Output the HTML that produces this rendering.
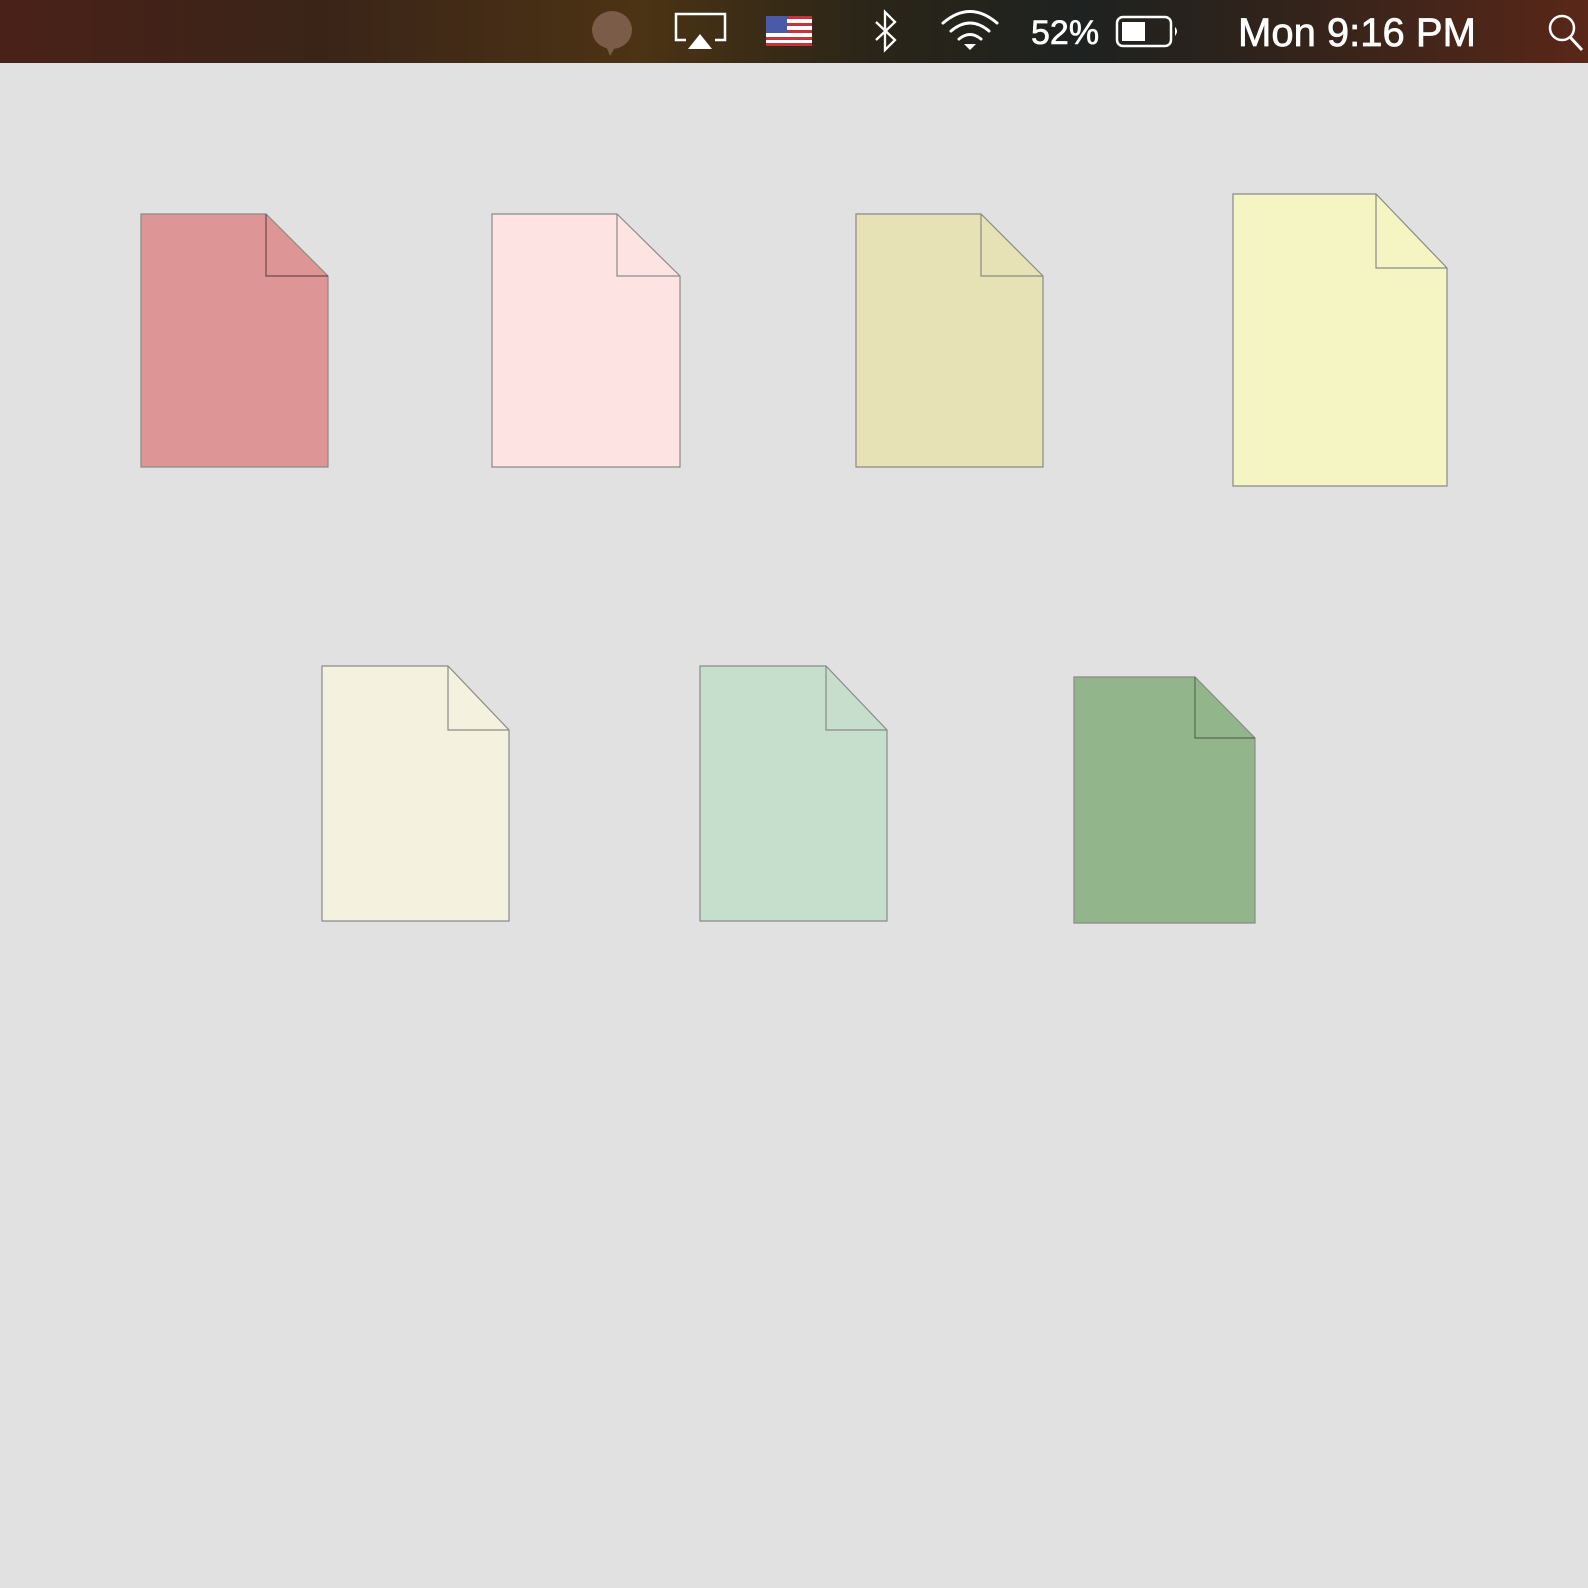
<!DOCTYPE html>
<html><head><meta charset="utf-8"><style>
html,body{margin:0;padding:0;width:1588px;height:1588px;overflow:hidden;background:#e1e1e1;font-family:"Liberation Sans",sans-serif}
</style></head><body>
<svg width="1588" height="1588" viewBox="0 0 1588 1588" xmlns="http://www.w3.org/2000/svg">
<defs>
<linearGradient id="mb" x1="0" x2="1" y1="0" y2="0">
<stop offset="0" stop-color="#4a2119"/>
<stop offset="0.2" stop-color="#3a2418"/>
<stop offset="0.4" stop-color="#4c3314"/>
<stop offset="0.55" stop-color="#2a2518"/>
<stop offset="0.68" stop-color="#1e2220"/>
<stop offset="0.82" stop-color="#33231b"/>
<stop offset="1" stop-color="#5a2718"/>
</linearGradient>
</defs>
<rect x="0" y="0" width="1588" height="63" fill="url(#mb)"/>
<ellipse cx="612" cy="30" rx="20" ry="19" fill="#7a5c48"/>
<path d="M606 46 L610 56 L616 46 Z" fill="#7a5c48"/>
<path d="M686 40 H676 V14 H725 V40 H715" fill="none" stroke="#fff" stroke-width="2.5"/>
<path d="M688 49 L700 34 L712 49 Z" fill="#fff"/>
<g>
<rect x="766" y="16" width="46" height="30" fill="#fff"/>
<rect x="766" y="16" width="46" height="3" fill="#c8323a"/>
<rect x="766" y="23" width="46" height="3" fill="#c8323a"/>
<rect x="766" y="30" width="46" height="3" fill="#c8323a"/>
<rect x="766" y="37" width="46" height="3" fill="#c8323a"/>
<rect x="766" y="43" width="46" height="3" fill="#c8323a"/>
<rect x="766" y="16" width="21" height="17" fill="#4a5aa8"/>
</g>
<path d="M876 22 L895 40 L885 50 V12 L895 22 L876 40" fill="none" stroke="#fff" stroke-width="2.3"/>
<g fill="none" stroke="#fff" stroke-width="3" stroke-linecap="round">
<path d="M943 23 Q970 0 997 23"/>
<path d="M951 31 Q970 15 989 31"/>
<path d="M959 39 Q970 30 981 39"/>
</g>
<path d="M964 44 L970 50 L976 44 Z" fill="#fff"/>
<text x="1031" y="44" font-size="34" fill="#fff" stroke="#fff" stroke-width="0.6">52%</text>
<rect x="1117" y="17" width="54" height="29" rx="6" fill="none" stroke="#fff" stroke-width="2.5"/>
<rect x="1122" y="22" width="23" height="19" fill="#fff"/>
<path d="M1175 27 Q1179 31 1175 36 Z" fill="#fff"/>
<text x="1238" y="46" font-size="40" fill="#fff" stroke="#fff" stroke-width="0.7">Mon 9:16 PM</text>
<circle cx="1562" cy="28" r="12" fill="none" stroke="#fff" stroke-width="2.5"/>
<path d="M1570 37 L1582 50" stroke="#fff" stroke-width="3"/>
<g stroke="#8a8a8a" stroke-width="1.2">
<path d="M141 214 H266 L328 276 V467 H141 Z" fill="#de9595"/>
<path d="M266 214 V276 H328" fill="none" stroke="#6a4a4a"/>
<path d="M492 214 H617 L680 276 V467 H492 Z" fill="#fee3e3"/>
<path d="M617 214 V276 H680" fill="none"/>
<path d="M856 214 H981 L1043 276 V467 H856 Z" fill="#e6e2b6"/>
<path d="M981 214 V276 H1043" fill="none"/>
<path d="M1233 194 H1376 L1447 268 V486 H1233 Z" fill="#f5f4c3"/>
<path d="M1376 194 V268 H1447" fill="none"/>
<path d="M322 666 H448 L509 730 V921 H322 Z" fill="#f4f2df"/>
<path d="M448 666 V730 H509" fill="none"/>
<path d="M700 666 H826 L887 730 V921 H700 Z" fill="#c6dfcc"/>
<path d="M826 666 V730 H887" fill="none"/>
<path d="M1074 677 H1195 L1255 738 V923 H1074 Z" fill="#93b58c"/>
<path d="M1195 677 V738 H1255" fill="none" stroke="#5a6a55"/>
</g>
</svg>
</body></html>
